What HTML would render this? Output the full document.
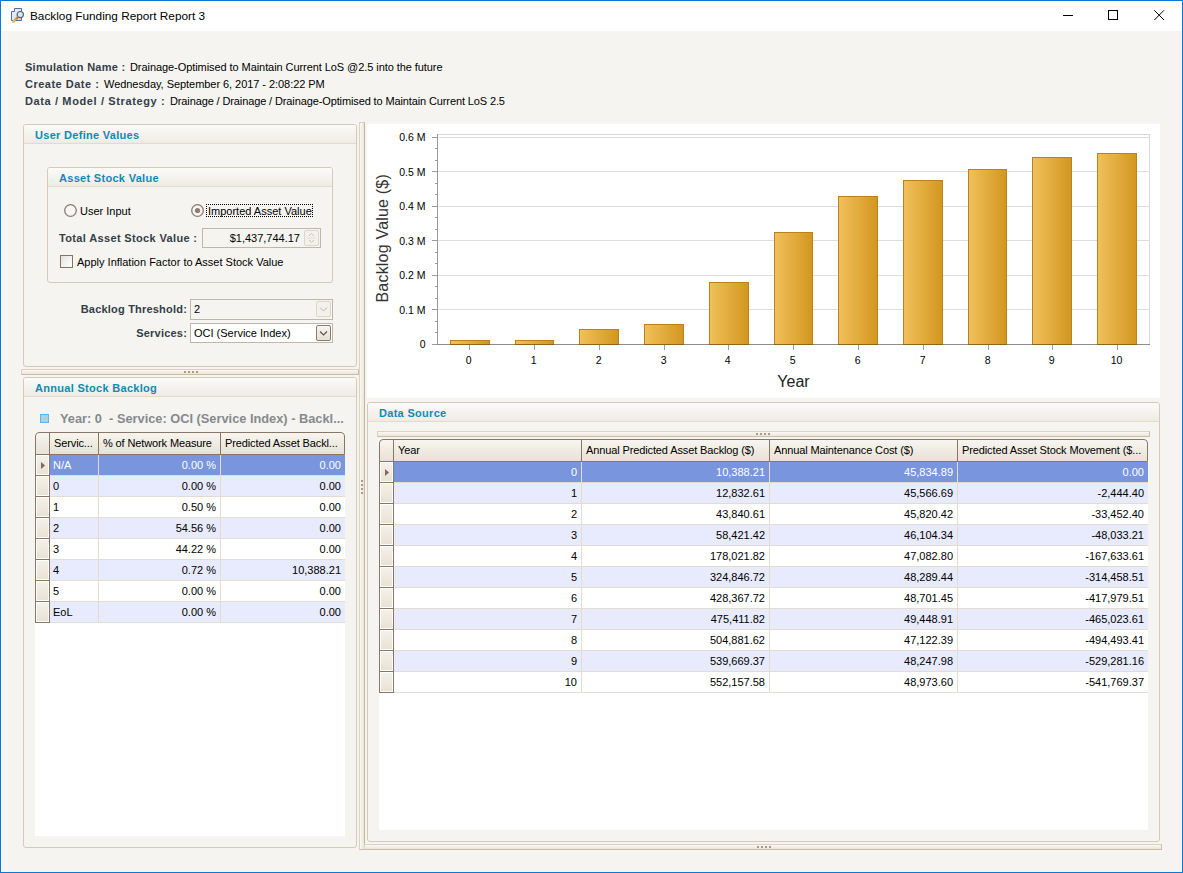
<!DOCTYPE html>
<html><head><meta charset="utf-8"><style>
html,body{margin:0;padding:0;}
body{width:1183px;height:873px;position:relative;overflow:hidden;background:#f5f4f0;font-family:"Liberation Sans", sans-serif;}
.t{position:absolute;white-space:nowrap;}
</style></head><body>
<div style="position:absolute;left:0px;top:0px;width:1183px;height:31px;background:#fff;"></div><div style="position:absolute;left:0px;top:0px;width:1183px;height:1px;background:#0a78d6;"></div><div style="position:absolute;left:0px;top:0px;width:1px;height:873px;background:#0a78d6;"></div><div style="position:absolute;left:1182px;top:0px;width:1px;height:873px;background:#0a78d6;"></div><div style="position:absolute;left:0px;top:872px;width:1183px;height:1px;background:#0a78d6;"></div><svg style="position:absolute;left:10px;top:7px" width="16" height="17" viewBox="0 0 16 17">
<defs><linearGradient id="dg" x1="0" y1="0" x2="1" y2="1"><stop offset="0" stop-color="#f4f6fb"/><stop offset="1" stop-color="#cdd6ea"/></linearGradient>
<linearGradient id="hg" x1="0" y1="0" x2="1" y2="0"><stop offset="0" stop-color="#f0c070"/><stop offset="1" stop-color="#b87a30"/></linearGradient></defs>
<path d="M1.5 4.5H4.5V1.5H11.5V13.5H1.5z" fill="url(#dg)" stroke="#4b6db0" stroke-width="1"/>
<circle cx="10.3" cy="7.6" r="3.1" fill="#d4eef5" stroke="#555c66" stroke-width="1.2"/>
<path d="M7.8 10.2 L3.2 14.8" stroke="url(#hg)" stroke-width="2.4" stroke-linecap="round"/>
</svg><div class="t" style="left:30px;font-size:11.8px;line-height:15px;top:9.21px;color:#000;">Backlog Funding Report Report 3</div><div style="position:absolute;left:1063px;top:15px;width:10px;height:1px;background:#000;"></div><div style="position:absolute;left:1108px;top:10px;width:10px;height:10px;border:1px solid #000;box-sizing:border-box;"></div><svg style="position:absolute;left:1154px;top:10px" width="11" height="11" viewBox="0 0 11 11"><path d="M0.3 0.3L10 10M10 0.3L0.3 10" stroke="#000" stroke-width="1"/></svg><div class="t" style="left:25px;font-size:11px;line-height:14px;top:60.19px;font-weight:bold;color:#343e48;letter-spacing:0.26px;">Simulation Name :</div><div class="t" style="left:130px;font-size:11px;line-height:14px;top:60.19px;color:#000;letter-spacing:-0.07px;">Drainage-Optimised to Maintain Current LoS @2.5 into the future</div><div class="t" style="left:25px;font-size:11px;line-height:14px;top:77.19px;font-weight:bold;color:#343e48;letter-spacing:0.5px;">Create Date :</div><div class="t" style="left:104px;font-size:11px;line-height:14px;top:77.19px;color:#000;letter-spacing:-0.05px;">Wednesday, September 6, 2017 - 2:08:22 PM</div><div class="t" style="left:25px;font-size:11px;line-height:14px;top:94.19px;font-weight:bold;color:#343e48;letter-spacing:0.62px;">Data / Model / Strategy :</div><div class="t" style="left:170px;font-size:11px;line-height:14px;top:94.19px;color:#000;letter-spacing:-0.12px;">Drainage / Drainage / Drainage-Optimised to Maintain Current LoS 2.5</div><div style="position:absolute;left:23px;top:124px;width:334px;height:243px;border:1px solid #d5cab8;border-radius:3px;box-sizing:border-box;"></div><div style="position:absolute;left:24px;top:125px;width:332px;height:18px;background:linear-gradient(#fcfbf9,#efebe4);border-radius:2px 2px 0 0;"></div><div style="position:absolute;left:24px;top:143px;width:332px;height:1px;background:#e3dbcc;"></div><div class="t" style="left:35px;font-size:11px;line-height:14px;top:128.19px;font-weight:bold;color:#0d8bb3;letter-spacing:0.3px;">User Define Values</div><div style="position:absolute;left:47px;top:167px;width:286px;height:116px;border:1px solid #d5cab8;border-radius:3px;box-sizing:border-box;"></div><div style="position:absolute;left:48px;top:168px;width:284px;height:18px;background:linear-gradient(#fcfbf9,#efebe4);border-radius:2px 2px 0 0;"></div><div style="position:absolute;left:48px;top:186px;width:284px;height:1px;background:#e3dbcc;"></div><div class="t" style="left:59px;font-size:11px;line-height:14px;top:171.19px;font-weight:bold;color:#0d8bb3;letter-spacing:0.3px;">Asset Stock Value</div><svg style="position:absolute;left:64px;top:204px" width="13" height="13" viewBox="0 0 13 13"><circle cx="6.5" cy="6.5" r="5.8" fill="#f7f6f2" stroke="#8a7b72" stroke-width="1.3"/></svg><div class="t" style="left:80px;font-size:11px;line-height:14px;top:204.19px;color:#000;">User Input</div><svg style="position:absolute;left:191px;top:204px" width="13" height="13" viewBox="0 0 13 13"><circle cx="6.5" cy="6.5" r="5.8" fill="#f7f6f2" stroke="#8a7b72" stroke-width="1.3"/><circle cx="6.5" cy="6.5" r="2.6" fill="#8d7d72"/></svg><div style="position:absolute;left:206px;top:204px;width:107px;height:13px;border:1px dotted #000;box-sizing:border-box;"></div><div class="t" style="left:208px;font-size:11px;line-height:14px;top:204.19px;color:#000;">Imported Asset Value</div><div class="t" style="left:59px;font-size:11px;line-height:14px;top:231.19px;font-weight:bold;color:#343e48;letter-spacing:0.35px;">Total Asset Stock Value :</div><div style="position:absolute;left:202px;top:228px;width:119px;height:20px;border:1px solid #c2b6a6;box-sizing:border-box;background:#f5f4f0;"></div><div class="t" style="right:883px;font-size:11px;line-height:14px;top:231.19px;color:#000;">$1,437,744.17</div><div style="position:absolute;left:304px;top:230px;width:15px;height:16px;border:1px solid #ddd5c9;border-radius:2px;box-sizing:border-box;background:#f3f1ec;"></div><svg style="position:absolute;left:306px;top:231px" width="11" height="14" viewBox="0 0 11 14"><path d="M3 5L5.5 2.5L8 5M3 9L5.5 11.5L8 9" fill="none" stroke="#c9c0b4" stroke-width="1"/><path d="M1 7h9" stroke="#e3ddd3"/></svg><div style="position:absolute;left:60px;top:255px;width:13px;height:13px;border:1px solid #85736a;box-sizing:border-box;background:linear-gradient(135deg,#e6e2dc,#fff);"></div><div class="t" style="left:77px;font-size:11px;line-height:14px;top:255.19px;color:#000;">Apply Inflation Factor to Asset Stock Value</div><div class="t" style="right:996px;font-size:11px;line-height:14px;top:302.19px;font-weight:bold;color:#343e48;letter-spacing:0.2px;">Backlog Threshold:</div><div style="position:absolute;left:190px;top:299px;width:143px;height:21px;border:1px solid #c2b6a6;box-sizing:border-box;background:#f5f4f0;"></div><div class="t" style="left:194px;font-size:11px;line-height:14px;top:302.19px;color:#000;">2</div><div style="position:absolute;left:316px;top:301px;width:15px;height:16px;border:1px solid #ddd5c9;border-radius:2px;box-sizing:border-box;background:#f3f1ec;"></div><svg style="position:absolute;left:316px;top:301px" width="15" height="16" viewBox="0 0 15 16"><path d="M4 6.5L7.5 10L11 6.5" fill="none" stroke="#bdb3a7" stroke-width="1"/></svg><div class="t" style="right:996px;font-size:11px;line-height:14px;top:326.19px;font-weight:bold;color:#343e48;letter-spacing:0.2px;">Services:</div><div style="position:absolute;left:190px;top:323px;width:143px;height:20px;border:1px solid #c2b6a6;box-sizing:border-box;background:#fff;"></div><div class="t" style="left:194px;font-size:11px;line-height:14px;top:326.19px;color:#000;">OCI (Service Index)</div><div style="position:absolute;left:316px;top:325px;width:15px;height:16px;border:1px solid #8b7b70;border-radius:2px;box-sizing:border-box;background:linear-gradient(#f7f5f0,#e6dfd2);"></div><svg style="position:absolute;left:316px;top:325px" width="15" height="16" viewBox="0 0 15 16"><path d="M4 6.5L7.5 10L11 6.5" fill="none" stroke="#5e4f46" stroke-width="1.1"/></svg><div style="position:absolute;left:21px;top:369px;width:338px;height:6px;border:1px solid #dcd2c0;border-bottom-color:#c9bca8;border-right-color:#c9bca8;box-sizing:border-box;background:linear-gradient(#faf8f3,#ece6d9);"></div><div style="position:absolute;left:184px;top:371px;width:2px;height:2px;background:#a89a86;"></div><div style="position:absolute;left:188px;top:371px;width:2px;height:2px;background:#a89a86;"></div><div style="position:absolute;left:192px;top:371px;width:2px;height:2px;background:#a89a86;"></div><div style="position:absolute;left:196px;top:371px;width:2px;height:2px;background:#a89a86;"></div><div style="position:absolute;left:23px;top:377px;width:334px;height:471px;border:1px solid #d5cab8;border-radius:3px;box-sizing:border-box;"></div><div style="position:absolute;left:24px;top:378px;width:332px;height:18px;background:linear-gradient(#fcfbf9,#efebe4);border-radius:2px 2px 0 0;"></div><div style="position:absolute;left:24px;top:396px;width:332px;height:1px;background:#e3dbcc;"></div><div class="t" style="left:35px;font-size:11px;line-height:14px;top:381.19px;font-weight:bold;color:#0d8bb3;letter-spacing:0.3px;">Annual Stock Backlog</div><div style="position:absolute;left:40px;top:414px;width:9px;height:9px;background:#a3d3ea;border:1px solid #62b4da;box-sizing:border-box;"></div><div class="t" style="left:60px;font-size:12.8px;line-height:16px;top:410.56px;font-weight:bold;color:#858a8e;">Year: 0&nbsp; - Service: OCI (Service Index) - Backl...</div><div style="position:absolute;left:35px;top:432px;width:310px;height:404px;background:#fff;"></div><div style="position:absolute;left:35px;top:432px;width:310px;height:23px;background:linear-gradient(#f7f5f0,#e8e2d4);border:1px solid #8a7666;box-sizing:border-box;border-radius:4px 4px 0 0;"></div><div style="position:absolute;left:49px;top:432px;width:1px;height:23px;background:#8a7666;"></div><div style="position:absolute;left:98px;top:432px;width:1px;height:23px;background:#8a7666;"></div><div style="position:absolute;left:220px;top:432px;width:1px;height:23px;background:#8a7666;"></div><div class="t" style="left:54px;font-size:11px;line-height:14px;top:436.19px;color:#000;letter-spacing:-0.12px;">Servic...</div><div class="t" style="left:103px;font-size:11px;line-height:14px;top:436.19px;color:#000;letter-spacing:-0.12px;">% of Network Measure</div><div class="t" style="left:225px;font-size:11px;line-height:14px;top:436.19px;color:#000;letter-spacing:-0.12px;">Predicted Asset Backl...</div><div style="position:absolute;left:50px;top:455px;width:295px;height:20px;background:#7895dd;"></div><div style="position:absolute;left:50px;top:475px;width:295px;height:1px;background:#e4ddcf;"></div><div style="position:absolute;left:98px;top:455px;width:1px;height:21px;background:#e4ddcf;"></div><div style="position:absolute;left:220px;top:455px;width:1px;height:21px;background:#e4ddcf;"></div><div style="position:absolute;left:35px;top:454px;width:15px;height:22px;border:1px solid #8a7666;box-sizing:border-box;background:linear-gradient(#f5f2eb,#e8e1d3);box-shadow:inset 1px 1px 0 #fff, inset -1px -1px 0 #fff;"></div><svg style="position:absolute;left:41px;top:461px" width="5" height="9" viewBox="0 0 5 9"><path d="M0 1L4 4.5L0 8z" fill="#7d6a5c"/></svg><div class="t" style="left:53px;font-size:11px;line-height:14px;top:458.19px;color:#fff;">N/A</div><div class="t" style="right:967px;font-size:11px;line-height:14px;top:458.19px;color:#fff;">0.00 %</div><div class="t" style="right:842px;font-size:11px;line-height:14px;top:458.19px;color:#fff;">0.00</div><div style="position:absolute;left:50px;top:476px;width:295px;height:20px;background:#e8eafd;"></div><div style="position:absolute;left:50px;top:496px;width:295px;height:1px;background:#e4ddcf;"></div><div style="position:absolute;left:98px;top:476px;width:1px;height:21px;background:#e4ddcf;"></div><div style="position:absolute;left:220px;top:476px;width:1px;height:21px;background:#e4ddcf;"></div><div style="position:absolute;left:35px;top:475px;width:15px;height:22px;border:1px solid #8a7666;box-sizing:border-box;background:linear-gradient(#f5f2eb,#e8e1d3);box-shadow:inset 1px 1px 0 #fff, inset -1px -1px 0 #fff;"></div><div class="t" style="left:53px;font-size:11px;line-height:14px;top:479.19px;color:#000;">0</div><div class="t" style="right:967px;font-size:11px;line-height:14px;top:479.19px;color:#000;">0.00 %</div><div class="t" style="right:842px;font-size:11px;line-height:14px;top:479.19px;color:#000;">0.00</div><div style="position:absolute;left:50px;top:497px;width:295px;height:20px;background:#fff;"></div><div style="position:absolute;left:50px;top:517px;width:295px;height:1px;background:#e4ddcf;"></div><div style="position:absolute;left:98px;top:497px;width:1px;height:21px;background:#e4ddcf;"></div><div style="position:absolute;left:220px;top:497px;width:1px;height:21px;background:#e4ddcf;"></div><div style="position:absolute;left:35px;top:496px;width:15px;height:22px;border:1px solid #8a7666;box-sizing:border-box;background:linear-gradient(#f5f2eb,#e8e1d3);box-shadow:inset 1px 1px 0 #fff, inset -1px -1px 0 #fff;"></div><div class="t" style="left:53px;font-size:11px;line-height:14px;top:500.19px;color:#000;">1</div><div class="t" style="right:967px;font-size:11px;line-height:14px;top:500.19px;color:#000;">0.50 %</div><div class="t" style="right:842px;font-size:11px;line-height:14px;top:500.19px;color:#000;">0.00</div><div style="position:absolute;left:50px;top:518px;width:295px;height:20px;background:#e8eafd;"></div><div style="position:absolute;left:50px;top:538px;width:295px;height:1px;background:#e4ddcf;"></div><div style="position:absolute;left:98px;top:518px;width:1px;height:21px;background:#e4ddcf;"></div><div style="position:absolute;left:220px;top:518px;width:1px;height:21px;background:#e4ddcf;"></div><div style="position:absolute;left:35px;top:517px;width:15px;height:22px;border:1px solid #8a7666;box-sizing:border-box;background:linear-gradient(#f5f2eb,#e8e1d3);box-shadow:inset 1px 1px 0 #fff, inset -1px -1px 0 #fff;"></div><div class="t" style="left:53px;font-size:11px;line-height:14px;top:521.19px;color:#000;">2</div><div class="t" style="right:967px;font-size:11px;line-height:14px;top:521.19px;color:#000;">54.56 %</div><div class="t" style="right:842px;font-size:11px;line-height:14px;top:521.19px;color:#000;">0.00</div><div style="position:absolute;left:50px;top:539px;width:295px;height:20px;background:#fff;"></div><div style="position:absolute;left:50px;top:559px;width:295px;height:1px;background:#e4ddcf;"></div><div style="position:absolute;left:98px;top:539px;width:1px;height:21px;background:#e4ddcf;"></div><div style="position:absolute;left:220px;top:539px;width:1px;height:21px;background:#e4ddcf;"></div><div style="position:absolute;left:35px;top:538px;width:15px;height:22px;border:1px solid #8a7666;box-sizing:border-box;background:linear-gradient(#f5f2eb,#e8e1d3);box-shadow:inset 1px 1px 0 #fff, inset -1px -1px 0 #fff;"></div><div class="t" style="left:53px;font-size:11px;line-height:14px;top:542.19px;color:#000;">3</div><div class="t" style="right:967px;font-size:11px;line-height:14px;top:542.19px;color:#000;">44.22 %</div><div class="t" style="right:842px;font-size:11px;line-height:14px;top:542.19px;color:#000;">0.00</div><div style="position:absolute;left:50px;top:560px;width:295px;height:20px;background:#e8eafd;"></div><div style="position:absolute;left:50px;top:580px;width:295px;height:1px;background:#e4ddcf;"></div><div style="position:absolute;left:98px;top:560px;width:1px;height:21px;background:#e4ddcf;"></div><div style="position:absolute;left:220px;top:560px;width:1px;height:21px;background:#e4ddcf;"></div><div style="position:absolute;left:35px;top:559px;width:15px;height:22px;border:1px solid #8a7666;box-sizing:border-box;background:linear-gradient(#f5f2eb,#e8e1d3);box-shadow:inset 1px 1px 0 #fff, inset -1px -1px 0 #fff;"></div><div class="t" style="left:53px;font-size:11px;line-height:14px;top:563.19px;color:#000;">4</div><div class="t" style="right:967px;font-size:11px;line-height:14px;top:563.19px;color:#000;">0.72 %</div><div class="t" style="right:842px;font-size:11px;line-height:14px;top:563.19px;color:#000;">10,388.21</div><div style="position:absolute;left:50px;top:581px;width:295px;height:20px;background:#fff;"></div><div style="position:absolute;left:50px;top:601px;width:295px;height:1px;background:#e4ddcf;"></div><div style="position:absolute;left:98px;top:581px;width:1px;height:21px;background:#e4ddcf;"></div><div style="position:absolute;left:220px;top:581px;width:1px;height:21px;background:#e4ddcf;"></div><div style="position:absolute;left:35px;top:580px;width:15px;height:22px;border:1px solid #8a7666;box-sizing:border-box;background:linear-gradient(#f5f2eb,#e8e1d3);box-shadow:inset 1px 1px 0 #fff, inset -1px -1px 0 #fff;"></div><div class="t" style="left:53px;font-size:11px;line-height:14px;top:584.19px;color:#000;">5</div><div class="t" style="right:967px;font-size:11px;line-height:14px;top:584.19px;color:#000;">0.00 %</div><div class="t" style="right:842px;font-size:11px;line-height:14px;top:584.19px;color:#000;">0.00</div><div style="position:absolute;left:50px;top:602px;width:295px;height:20px;background:#e8eafd;"></div><div style="position:absolute;left:50px;top:622px;width:295px;height:1px;background:#e4ddcf;"></div><div style="position:absolute;left:98px;top:602px;width:1px;height:21px;background:#e4ddcf;"></div><div style="position:absolute;left:220px;top:602px;width:1px;height:21px;background:#e4ddcf;"></div><div style="position:absolute;left:35px;top:601px;width:15px;height:22px;border:1px solid #8a7666;box-sizing:border-box;background:linear-gradient(#f5f2eb,#e8e1d3);box-shadow:inset 1px 1px 0 #fff, inset -1px -1px 0 #fff;"></div><div class="t" style="left:53px;font-size:11px;line-height:14px;top:605.19px;color:#000;">EoL</div><div class="t" style="right:967px;font-size:11px;line-height:14px;top:605.19px;color:#000;">0.00 %</div><div class="t" style="right:842px;font-size:11px;line-height:14px;top:605.19px;color:#000;">0.00</div><div style="position:absolute;left:359px;top:122px;width:6px;height:728px;border:1px solid #dcd2c0;border-bottom-color:#c9bca8;border-right-color:#c4b5a2;box-sizing:border-box;background:linear-gradient(90deg,#faf8f3,#ece6d9);"></div><div style="position:absolute;left:361px;top:480px;width:2px;height:2px;background:#a89a86;"></div><div style="position:absolute;left:361px;top:484px;width:2px;height:2px;background:#a89a86;"></div><div style="position:absolute;left:361px;top:488px;width:2px;height:2px;background:#a89a86;"></div><div style="position:absolute;left:361px;top:492px;width:2px;height:2px;background:#a89a86;"></div><div style="position:absolute;left:367px;top:124px;width:793px;height:274px;background:#fff;"></div><svg style="position:absolute;left:0;top:0" width="1183" height="873" shape-rendering="crispEdges"><defs><linearGradient id="bg" x1="0" x2="1" y1="0" y2="0"><stop offset="0" stop-color="#f1c15c"/><stop offset="1" stop-color="#d2961f"/></linearGradient></defs><rect x="437.5" y="134.5" width="712" height="210" fill="none" stroke="#d9d9d9"/><line x1="438" y1="137.5" x2="1150" y2="137.5" stroke="#dedede"/><line x1="438" y1="171.5" x2="1150" y2="171.5" stroke="#dedede"/><line x1="438" y1="206.5" x2="1150" y2="206.5" stroke="#dedede"/><line x1="438" y1="240.5" x2="1150" y2="240.5" stroke="#dedede"/><line x1="438" y1="275.5" x2="1150" y2="275.5" stroke="#dedede"/><line x1="438" y1="309.5" x2="1150" y2="309.5" stroke="#dedede"/><line x1="437.5" y1="134" x2="437.5" y2="345" stroke="#9a9a9a"/><line x1="432" y1="344.5" x2="1150" y2="344.5" stroke="#8c8c8c"/><line x1="432" y1="344.5" x2="437" y2="344.5" stroke="#9a9a9a"/><line x1="435" y1="332.5" x2="437" y2="332.5" stroke="#9a9a9a"/><line x1="435" y1="321.5" x2="437" y2="321.5" stroke="#9a9a9a"/><line x1="432" y1="309.5" x2="437" y2="309.5" stroke="#9a9a9a"/><line x1="435" y1="298.5" x2="437" y2="298.5" stroke="#9a9a9a"/><line x1="435" y1="286.5" x2="437" y2="286.5" stroke="#9a9a9a"/><line x1="432" y1="275.5" x2="437" y2="275.5" stroke="#9a9a9a"/><line x1="435" y1="263.5" x2="437" y2="263.5" stroke="#9a9a9a"/><line x1="435" y1="252.5" x2="437" y2="252.5" stroke="#9a9a9a"/><line x1="432" y1="240.5" x2="437" y2="240.5" stroke="#9a9a9a"/><line x1="435" y1="229.5" x2="437" y2="229.5" stroke="#9a9a9a"/><line x1="435" y1="217.5" x2="437" y2="217.5" stroke="#9a9a9a"/><line x1="432" y1="206.5" x2="437" y2="206.5" stroke="#9a9a9a"/><line x1="435" y1="194.5" x2="437" y2="194.5" stroke="#9a9a9a"/><line x1="435" y1="183.5" x2="437" y2="183.5" stroke="#9a9a9a"/><line x1="432" y1="171.5" x2="437" y2="171.5" stroke="#9a9a9a"/><line x1="435" y1="160.5" x2="437" y2="160.5" stroke="#9a9a9a"/><line x1="435" y1="148.5" x2="437" y2="148.5" stroke="#9a9a9a"/><line x1="432" y1="137.5" x2="437" y2="137.5" stroke="#9a9a9a"/><rect x="450" y="340" width="40" height="5" fill="url(#bg)"/><path d="M450.5 344V340.5H489.5V344" fill="none" stroke="#b8831a"/><line x1="450" y1="344.5" x2="490" y2="344.5" stroke="#8d6418"/><line x1="469.5" y1="345" x2="469.5" y2="350" stroke="#9a9a9a"/><rect x="515" y="340" width="39" height="5" fill="url(#bg)"/><path d="M515.5 344V340.5H553.5V344" fill="none" stroke="#b8831a"/><line x1="515" y1="344.5" x2="554" y2="344.5" stroke="#8d6418"/><line x1="534.5" y1="345" x2="534.5" y2="350" stroke="#9a9a9a"/><rect x="579" y="329" width="40" height="16" fill="url(#bg)"/><path d="M579.5 344V329.5H618.5V344" fill="none" stroke="#b8831a"/><line x1="579" y1="344.5" x2="619" y2="344.5" stroke="#8d6418"/><line x1="599.5" y1="345" x2="599.5" y2="350" stroke="#9a9a9a"/><rect x="644" y="324" width="40" height="21" fill="url(#bg)"/><path d="M644.5 344V324.5H683.5V344" fill="none" stroke="#b8831a"/><line x1="644" y1="344.5" x2="684" y2="344.5" stroke="#8d6418"/><line x1="664.5" y1="345" x2="664.5" y2="350" stroke="#9a9a9a"/><rect x="709" y="282" width="40" height="63" fill="url(#bg)"/><path d="M709.5 344V282.5H748.5V344" fill="none" stroke="#b8831a"/><line x1="709" y1="344.5" x2="749" y2="344.5" stroke="#8d6418"/><line x1="728.5" y1="345" x2="728.5" y2="350" stroke="#9a9a9a"/><rect x="774" y="232" width="39" height="113" fill="url(#bg)"/><path d="M774.5 344V232.5H812.5V344" fill="none" stroke="#b8831a"/><line x1="774" y1="344.5" x2="813" y2="344.5" stroke="#8d6418"/><line x1="793.5" y1="345" x2="793.5" y2="350" stroke="#9a9a9a"/><rect x="838" y="196" width="40" height="149" fill="url(#bg)"/><path d="M838.5 344V196.5H877.5V344" fill="none" stroke="#b8831a"/><line x1="838" y1="344.5" x2="878" y2="344.5" stroke="#8d6418"/><line x1="858.5" y1="345" x2="858.5" y2="350" stroke="#9a9a9a"/><rect x="903" y="180" width="40" height="165" fill="url(#bg)"/><path d="M903.5 344V180.5H942.5V344" fill="none" stroke="#b8831a"/><line x1="903" y1="344.5" x2="943" y2="344.5" stroke="#8d6418"/><line x1="923.5" y1="345" x2="923.5" y2="350" stroke="#9a9a9a"/><rect x="968" y="169" width="39" height="176" fill="url(#bg)"/><path d="M968.5 344V169.5H1006.5V344" fill="none" stroke="#b8831a"/><line x1="968" y1="344.5" x2="1007" y2="344.5" stroke="#8d6418"/><line x1="988.5" y1="345" x2="988.5" y2="350" stroke="#9a9a9a"/><rect x="1032" y="157" width="40" height="188" fill="url(#bg)"/><path d="M1032.5 344V157.5H1071.5V344" fill="none" stroke="#b8831a"/><line x1="1032" y1="344.5" x2="1072" y2="344.5" stroke="#8d6418"/><line x1="1052.5" y1="345" x2="1052.5" y2="350" stroke="#9a9a9a"/><rect x="1097" y="153" width="40" height="192" fill="url(#bg)"/><path d="M1097.5 344V153.5H1136.5V344" fill="none" stroke="#b8831a"/><line x1="1097" y1="344.5" x2="1137" y2="344.5" stroke="#8d6418"/><line x1="1117.5" y1="345" x2="1117.5" y2="350" stroke="#9a9a9a"/></svg><div class="t" style="right:757.5px;font-size:10.5px;line-height:13px;top:338.26px;color:#000;">0</div><div class="t" style="right:757.5px;font-size:10.5px;line-height:13px;top:303.76px;color:#000;">0.1 M</div><div class="t" style="right:757.5px;font-size:10.5px;line-height:13px;top:269.26px;color:#000;">0.2 M</div><div class="t" style="right:757.5px;font-size:10.5px;line-height:13px;top:234.76px;color:#000;">0.3 M</div><div class="t" style="right:757.5px;font-size:10.5px;line-height:13px;top:200.26px;color:#000;">0.4 M</div><div class="t" style="right:757.5px;font-size:10.5px;line-height:13px;top:165.76px;color:#000;">0.5 M</div><div class="t" style="right:757.5px;font-size:10.5px;line-height:13px;top:131.26px;color:#000;">0.6 M</div><div class="t" style="left:318.6px;width:300px;text-align:center;font-size:10.5px;line-height:13px;top:354.16px;color:#000;">0</div><div class="t" style="left:383.6px;width:300px;text-align:center;font-size:10.5px;line-height:13px;top:354.16px;color:#000;">1</div><div class="t" style="left:448.6px;width:300px;text-align:center;font-size:10.5px;line-height:13px;top:354.16px;color:#000;">2</div><div class="t" style="left:513.6px;width:300px;text-align:center;font-size:10.5px;line-height:13px;top:354.16px;color:#000;">3</div><div class="t" style="left:577.6px;width:300px;text-align:center;font-size:10.5px;line-height:13px;top:354.16px;color:#000;">4</div><div class="t" style="left:642.6px;width:300px;text-align:center;font-size:10.5px;line-height:13px;top:354.16px;color:#000;">5</div><div class="t" style="left:707.6px;width:300px;text-align:center;font-size:10.5px;line-height:13px;top:354.16px;color:#000;">6</div><div class="t" style="left:772.6px;width:300px;text-align:center;font-size:10.5px;line-height:13px;top:354.16px;color:#000;">7</div><div class="t" style="left:837.6px;width:300px;text-align:center;font-size:10.5px;line-height:13px;top:354.16px;color:#000;">8</div><div class="t" style="left:901.5999999999999px;width:300px;text-align:center;font-size:10.5px;line-height:13px;top:354.16px;color:#000;">9</div><div class="t" style="left:966.5999999999999px;width:300px;text-align:center;font-size:10.5px;line-height:13px;top:354.16px;color:#000;">10</div><div class="t" style="left:643.5px;width:300px;text-align:center;font-size:16px;line-height:20px;top:372.26px;color:#222;">Year</div><div class="t" style="left:387.5px;top:239.3px;font-size:16px;line-height:20px;color:#333;letter-spacing:0.2px;transform:translate(0,0) rotate(-90deg);transform-origin:0 0;"><div style="position:relative;left:-63.5px;top:-15.5px;white-space:nowrap;">Backlog Value ($)</div></div><div style="position:absolute;left:367px;top:402px;width:793px;height:440px;border:1px solid #d5cab8;border-radius:3px;box-sizing:border-box;"></div><div style="position:absolute;left:368px;top:403px;width:791px;height:18px;background:linear-gradient(#fcfbf9,#efebe4);border-radius:2px 2px 0 0;"></div><div style="position:absolute;left:368px;top:421px;width:791px;height:1px;background:#e3dbcc;"></div><div class="t" style="left:379px;font-size:11px;line-height:14px;top:406.19px;font-weight:bold;color:#0d8bb3;letter-spacing:0.3px;">Data Source</div><div style="position:absolute;left:377px;top:431px;width:773px;height:6px;border:1px solid #dcd2c0;border-bottom-color:#c9bca8;border-right-color:#c9bca8;box-sizing:border-box;background:linear-gradient(#faf8f3,#ece6d9);"></div><div style="position:absolute;left:756px;top:433px;width:2px;height:2px;background:#a89a86;"></div><div style="position:absolute;left:760px;top:433px;width:2px;height:2px;background:#a89a86;"></div><div style="position:absolute;left:764px;top:433px;width:2px;height:2px;background:#a89a86;"></div><div style="position:absolute;left:768px;top:433px;width:2px;height:2px;background:#a89a86;"></div><div style="position:absolute;left:379px;top:439px;width:769px;height:391px;background:#fff;"></div><div style="position:absolute;left:379px;top:439px;width:769px;height:23px;background:linear-gradient(#f7f5f0,#e8e2d4);border:1px solid #8a7666;box-sizing:border-box;border-radius:4px 4px 0 0;"></div><div style="position:absolute;left:393px;top:439px;width:1px;height:23px;background:#8a7666;"></div><div style="position:absolute;left:581px;top:439px;width:1px;height:23px;background:#8a7666;"></div><div style="position:absolute;left:769px;top:439px;width:1px;height:23px;background:#8a7666;"></div><div style="position:absolute;left:957px;top:439px;width:1px;height:23px;background:#8a7666;"></div><div class="t" style="left:398px;font-size:11px;line-height:14px;top:443.19px;color:#000;letter-spacing:-0.12px;">Year</div><div class="t" style="left:586px;font-size:11px;line-height:14px;top:443.19px;color:#000;letter-spacing:-0.12px;">Annual Predicted Asset Backlog ($)</div><div class="t" style="left:774px;font-size:11px;line-height:14px;top:443.19px;color:#000;letter-spacing:-0.12px;">Annual Maintenance Cost ($)</div><div class="t" style="left:962px;font-size:11px;line-height:14px;top:443.19px;color:#000;letter-spacing:-0.12px;">Predicted Asset Stock Movement ($...</div><div style="position:absolute;left:394px;top:462px;width:754px;height:20px;background:#7895dd;"></div><div style="position:absolute;left:394px;top:482px;width:754px;height:1px;background:#e4ddcf;"></div><div style="position:absolute;left:581px;top:462px;width:1px;height:21px;background:#e4ddcf;"></div><div style="position:absolute;left:769px;top:462px;width:1px;height:21px;background:#e4ddcf;"></div><div style="position:absolute;left:957px;top:462px;width:1px;height:21px;background:#e4ddcf;"></div><div style="position:absolute;left:379px;top:461px;width:15px;height:22px;border:1px solid #8a7666;box-sizing:border-box;background:linear-gradient(#f5f2eb,#e8e1d3);box-shadow:inset 1px 1px 0 #fff, inset -1px -1px 0 #fff;"></div><svg style="position:absolute;left:385px;top:468px" width="5" height="9" viewBox="0 0 5 9"><path d="M0 1L4 4.5L0 8z" fill="#7d6a5c"/></svg><div class="t" style="right:606px;font-size:11px;line-height:14px;top:465.19px;color:#fff;">0</div><div class="t" style="right:418px;font-size:11px;line-height:14px;top:465.19px;color:#fff;">10,388.21</div><div class="t" style="right:230px;font-size:11px;line-height:14px;top:465.19px;color:#fff;">45,834.89</div><div class="t" style="right:39px;font-size:11px;line-height:14px;top:465.19px;color:#fff;">0.00</div><div style="position:absolute;left:394px;top:483px;width:754px;height:20px;background:#e8eafd;"></div><div style="position:absolute;left:394px;top:503px;width:754px;height:1px;background:#e4ddcf;"></div><div style="position:absolute;left:581px;top:483px;width:1px;height:21px;background:#e4ddcf;"></div><div style="position:absolute;left:769px;top:483px;width:1px;height:21px;background:#e4ddcf;"></div><div style="position:absolute;left:957px;top:483px;width:1px;height:21px;background:#e4ddcf;"></div><div style="position:absolute;left:379px;top:482px;width:15px;height:22px;border:1px solid #8a7666;box-sizing:border-box;background:linear-gradient(#f5f2eb,#e8e1d3);box-shadow:inset 1px 1px 0 #fff, inset -1px -1px 0 #fff;"></div><div class="t" style="right:606px;font-size:11px;line-height:14px;top:486.19px;color:#000;">1</div><div class="t" style="right:418px;font-size:11px;line-height:14px;top:486.19px;color:#000;">12,832.61</div><div class="t" style="right:230px;font-size:11px;line-height:14px;top:486.19px;color:#000;">45,566.69</div><div class="t" style="right:39px;font-size:11px;line-height:14px;top:486.19px;color:#000;">-2,444.40</div><div style="position:absolute;left:394px;top:504px;width:754px;height:20px;background:#fff;"></div><div style="position:absolute;left:394px;top:524px;width:754px;height:1px;background:#e4ddcf;"></div><div style="position:absolute;left:581px;top:504px;width:1px;height:21px;background:#e4ddcf;"></div><div style="position:absolute;left:769px;top:504px;width:1px;height:21px;background:#e4ddcf;"></div><div style="position:absolute;left:957px;top:504px;width:1px;height:21px;background:#e4ddcf;"></div><div style="position:absolute;left:379px;top:503px;width:15px;height:22px;border:1px solid #8a7666;box-sizing:border-box;background:linear-gradient(#f5f2eb,#e8e1d3);box-shadow:inset 1px 1px 0 #fff, inset -1px -1px 0 #fff;"></div><div class="t" style="right:606px;font-size:11px;line-height:14px;top:507.19px;color:#000;">2</div><div class="t" style="right:418px;font-size:11px;line-height:14px;top:507.19px;color:#000;">43,840.61</div><div class="t" style="right:230px;font-size:11px;line-height:14px;top:507.19px;color:#000;">45,820.42</div><div class="t" style="right:39px;font-size:11px;line-height:14px;top:507.19px;color:#000;">-33,452.40</div><div style="position:absolute;left:394px;top:525px;width:754px;height:20px;background:#e8eafd;"></div><div style="position:absolute;left:394px;top:545px;width:754px;height:1px;background:#e4ddcf;"></div><div style="position:absolute;left:581px;top:525px;width:1px;height:21px;background:#e4ddcf;"></div><div style="position:absolute;left:769px;top:525px;width:1px;height:21px;background:#e4ddcf;"></div><div style="position:absolute;left:957px;top:525px;width:1px;height:21px;background:#e4ddcf;"></div><div style="position:absolute;left:379px;top:524px;width:15px;height:22px;border:1px solid #8a7666;box-sizing:border-box;background:linear-gradient(#f5f2eb,#e8e1d3);box-shadow:inset 1px 1px 0 #fff, inset -1px -1px 0 #fff;"></div><div class="t" style="right:606px;font-size:11px;line-height:14px;top:528.19px;color:#000;">3</div><div class="t" style="right:418px;font-size:11px;line-height:14px;top:528.19px;color:#000;">58,421.42</div><div class="t" style="right:230px;font-size:11px;line-height:14px;top:528.19px;color:#000;">46,104.34</div><div class="t" style="right:39px;font-size:11px;line-height:14px;top:528.19px;color:#000;">-48,033.21</div><div style="position:absolute;left:394px;top:546px;width:754px;height:20px;background:#fff;"></div><div style="position:absolute;left:394px;top:566px;width:754px;height:1px;background:#e4ddcf;"></div><div style="position:absolute;left:581px;top:546px;width:1px;height:21px;background:#e4ddcf;"></div><div style="position:absolute;left:769px;top:546px;width:1px;height:21px;background:#e4ddcf;"></div><div style="position:absolute;left:957px;top:546px;width:1px;height:21px;background:#e4ddcf;"></div><div style="position:absolute;left:379px;top:545px;width:15px;height:22px;border:1px solid #8a7666;box-sizing:border-box;background:linear-gradient(#f5f2eb,#e8e1d3);box-shadow:inset 1px 1px 0 #fff, inset -1px -1px 0 #fff;"></div><div class="t" style="right:606px;font-size:11px;line-height:14px;top:549.19px;color:#000;">4</div><div class="t" style="right:418px;font-size:11px;line-height:14px;top:549.19px;color:#000;">178,021.82</div><div class="t" style="right:230px;font-size:11px;line-height:14px;top:549.19px;color:#000;">47,082.80</div><div class="t" style="right:39px;font-size:11px;line-height:14px;top:549.19px;color:#000;">-167,633.61</div><div style="position:absolute;left:394px;top:567px;width:754px;height:20px;background:#e8eafd;"></div><div style="position:absolute;left:394px;top:587px;width:754px;height:1px;background:#e4ddcf;"></div><div style="position:absolute;left:581px;top:567px;width:1px;height:21px;background:#e4ddcf;"></div><div style="position:absolute;left:769px;top:567px;width:1px;height:21px;background:#e4ddcf;"></div><div style="position:absolute;left:957px;top:567px;width:1px;height:21px;background:#e4ddcf;"></div><div style="position:absolute;left:379px;top:566px;width:15px;height:22px;border:1px solid #8a7666;box-sizing:border-box;background:linear-gradient(#f5f2eb,#e8e1d3);box-shadow:inset 1px 1px 0 #fff, inset -1px -1px 0 #fff;"></div><div class="t" style="right:606px;font-size:11px;line-height:14px;top:570.19px;color:#000;">5</div><div class="t" style="right:418px;font-size:11px;line-height:14px;top:570.19px;color:#000;">324,846.72</div><div class="t" style="right:230px;font-size:11px;line-height:14px;top:570.19px;color:#000;">48,289.44</div><div class="t" style="right:39px;font-size:11px;line-height:14px;top:570.19px;color:#000;">-314,458.51</div><div style="position:absolute;left:394px;top:588px;width:754px;height:20px;background:#fff;"></div><div style="position:absolute;left:394px;top:608px;width:754px;height:1px;background:#e4ddcf;"></div><div style="position:absolute;left:581px;top:588px;width:1px;height:21px;background:#e4ddcf;"></div><div style="position:absolute;left:769px;top:588px;width:1px;height:21px;background:#e4ddcf;"></div><div style="position:absolute;left:957px;top:588px;width:1px;height:21px;background:#e4ddcf;"></div><div style="position:absolute;left:379px;top:587px;width:15px;height:22px;border:1px solid #8a7666;box-sizing:border-box;background:linear-gradient(#f5f2eb,#e8e1d3);box-shadow:inset 1px 1px 0 #fff, inset -1px -1px 0 #fff;"></div><div class="t" style="right:606px;font-size:11px;line-height:14px;top:591.19px;color:#000;">6</div><div class="t" style="right:418px;font-size:11px;line-height:14px;top:591.19px;color:#000;">428,367.72</div><div class="t" style="right:230px;font-size:11px;line-height:14px;top:591.19px;color:#000;">48,701.45</div><div class="t" style="right:39px;font-size:11px;line-height:14px;top:591.19px;color:#000;">-417,979.51</div><div style="position:absolute;left:394px;top:609px;width:754px;height:20px;background:#e8eafd;"></div><div style="position:absolute;left:394px;top:629px;width:754px;height:1px;background:#e4ddcf;"></div><div style="position:absolute;left:581px;top:609px;width:1px;height:21px;background:#e4ddcf;"></div><div style="position:absolute;left:769px;top:609px;width:1px;height:21px;background:#e4ddcf;"></div><div style="position:absolute;left:957px;top:609px;width:1px;height:21px;background:#e4ddcf;"></div><div style="position:absolute;left:379px;top:608px;width:15px;height:22px;border:1px solid #8a7666;box-sizing:border-box;background:linear-gradient(#f5f2eb,#e8e1d3);box-shadow:inset 1px 1px 0 #fff, inset -1px -1px 0 #fff;"></div><div class="t" style="right:606px;font-size:11px;line-height:14px;top:612.19px;color:#000;">7</div><div class="t" style="right:418px;font-size:11px;line-height:14px;top:612.19px;color:#000;">475,411.82</div><div class="t" style="right:230px;font-size:11px;line-height:14px;top:612.19px;color:#000;">49,448.91</div><div class="t" style="right:39px;font-size:11px;line-height:14px;top:612.19px;color:#000;">-465,023.61</div><div style="position:absolute;left:394px;top:630px;width:754px;height:20px;background:#fff;"></div><div style="position:absolute;left:394px;top:650px;width:754px;height:1px;background:#e4ddcf;"></div><div style="position:absolute;left:581px;top:630px;width:1px;height:21px;background:#e4ddcf;"></div><div style="position:absolute;left:769px;top:630px;width:1px;height:21px;background:#e4ddcf;"></div><div style="position:absolute;left:957px;top:630px;width:1px;height:21px;background:#e4ddcf;"></div><div style="position:absolute;left:379px;top:629px;width:15px;height:22px;border:1px solid #8a7666;box-sizing:border-box;background:linear-gradient(#f5f2eb,#e8e1d3);box-shadow:inset 1px 1px 0 #fff, inset -1px -1px 0 #fff;"></div><div class="t" style="right:606px;font-size:11px;line-height:14px;top:633.19px;color:#000;">8</div><div class="t" style="right:418px;font-size:11px;line-height:14px;top:633.19px;color:#000;">504,881.62</div><div class="t" style="right:230px;font-size:11px;line-height:14px;top:633.19px;color:#000;">47,122.39</div><div class="t" style="right:39px;font-size:11px;line-height:14px;top:633.19px;color:#000;">-494,493.41</div><div style="position:absolute;left:394px;top:651px;width:754px;height:20px;background:#e8eafd;"></div><div style="position:absolute;left:394px;top:671px;width:754px;height:1px;background:#e4ddcf;"></div><div style="position:absolute;left:581px;top:651px;width:1px;height:21px;background:#e4ddcf;"></div><div style="position:absolute;left:769px;top:651px;width:1px;height:21px;background:#e4ddcf;"></div><div style="position:absolute;left:957px;top:651px;width:1px;height:21px;background:#e4ddcf;"></div><div style="position:absolute;left:379px;top:650px;width:15px;height:22px;border:1px solid #8a7666;box-sizing:border-box;background:linear-gradient(#f5f2eb,#e8e1d3);box-shadow:inset 1px 1px 0 #fff, inset -1px -1px 0 #fff;"></div><div class="t" style="right:606px;font-size:11px;line-height:14px;top:654.19px;color:#000;">9</div><div class="t" style="right:418px;font-size:11px;line-height:14px;top:654.19px;color:#000;">539,669.37</div><div class="t" style="right:230px;font-size:11px;line-height:14px;top:654.19px;color:#000;">48,247.98</div><div class="t" style="right:39px;font-size:11px;line-height:14px;top:654.19px;color:#000;">-529,281.16</div><div style="position:absolute;left:394px;top:672px;width:754px;height:20px;background:#fff;"></div><div style="position:absolute;left:394px;top:692px;width:754px;height:1px;background:#e4ddcf;"></div><div style="position:absolute;left:581px;top:672px;width:1px;height:21px;background:#e4ddcf;"></div><div style="position:absolute;left:769px;top:672px;width:1px;height:21px;background:#e4ddcf;"></div><div style="position:absolute;left:957px;top:672px;width:1px;height:21px;background:#e4ddcf;"></div><div style="position:absolute;left:379px;top:671px;width:15px;height:22px;border:1px solid #8a7666;box-sizing:border-box;background:linear-gradient(#f5f2eb,#e8e1d3);box-shadow:inset 1px 1px 0 #fff, inset -1px -1px 0 #fff;"></div><div class="t" style="right:606px;font-size:11px;line-height:14px;top:675.19px;color:#000;">10</div><div class="t" style="right:418px;font-size:11px;line-height:14px;top:675.19px;color:#000;">552,157.58</div><div class="t" style="right:230px;font-size:11px;line-height:14px;top:675.19px;color:#000;">48,973.60</div><div class="t" style="right:39px;font-size:11px;line-height:14px;top:675.19px;color:#000;">-541,769.37</div><div style="position:absolute;left:364px;top:844px;width:798px;height:6px;border:1px solid #dcd2c0;border-bottom-color:#c9bca8;border-right-color:#c9bca8;box-sizing:border-box;background:linear-gradient(#faf8f3,#ece6d9);"></div><div style="position:absolute;left:757px;top:846px;width:2px;height:2px;background:#a89a86;"></div><div style="position:absolute;left:761px;top:846px;width:2px;height:2px;background:#a89a86;"></div><div style="position:absolute;left:765px;top:846px;width:2px;height:2px;background:#a89a86;"></div><div style="position:absolute;left:769px;top:846px;width:2px;height:2px;background:#a89a86;"></div>
</body></html>
